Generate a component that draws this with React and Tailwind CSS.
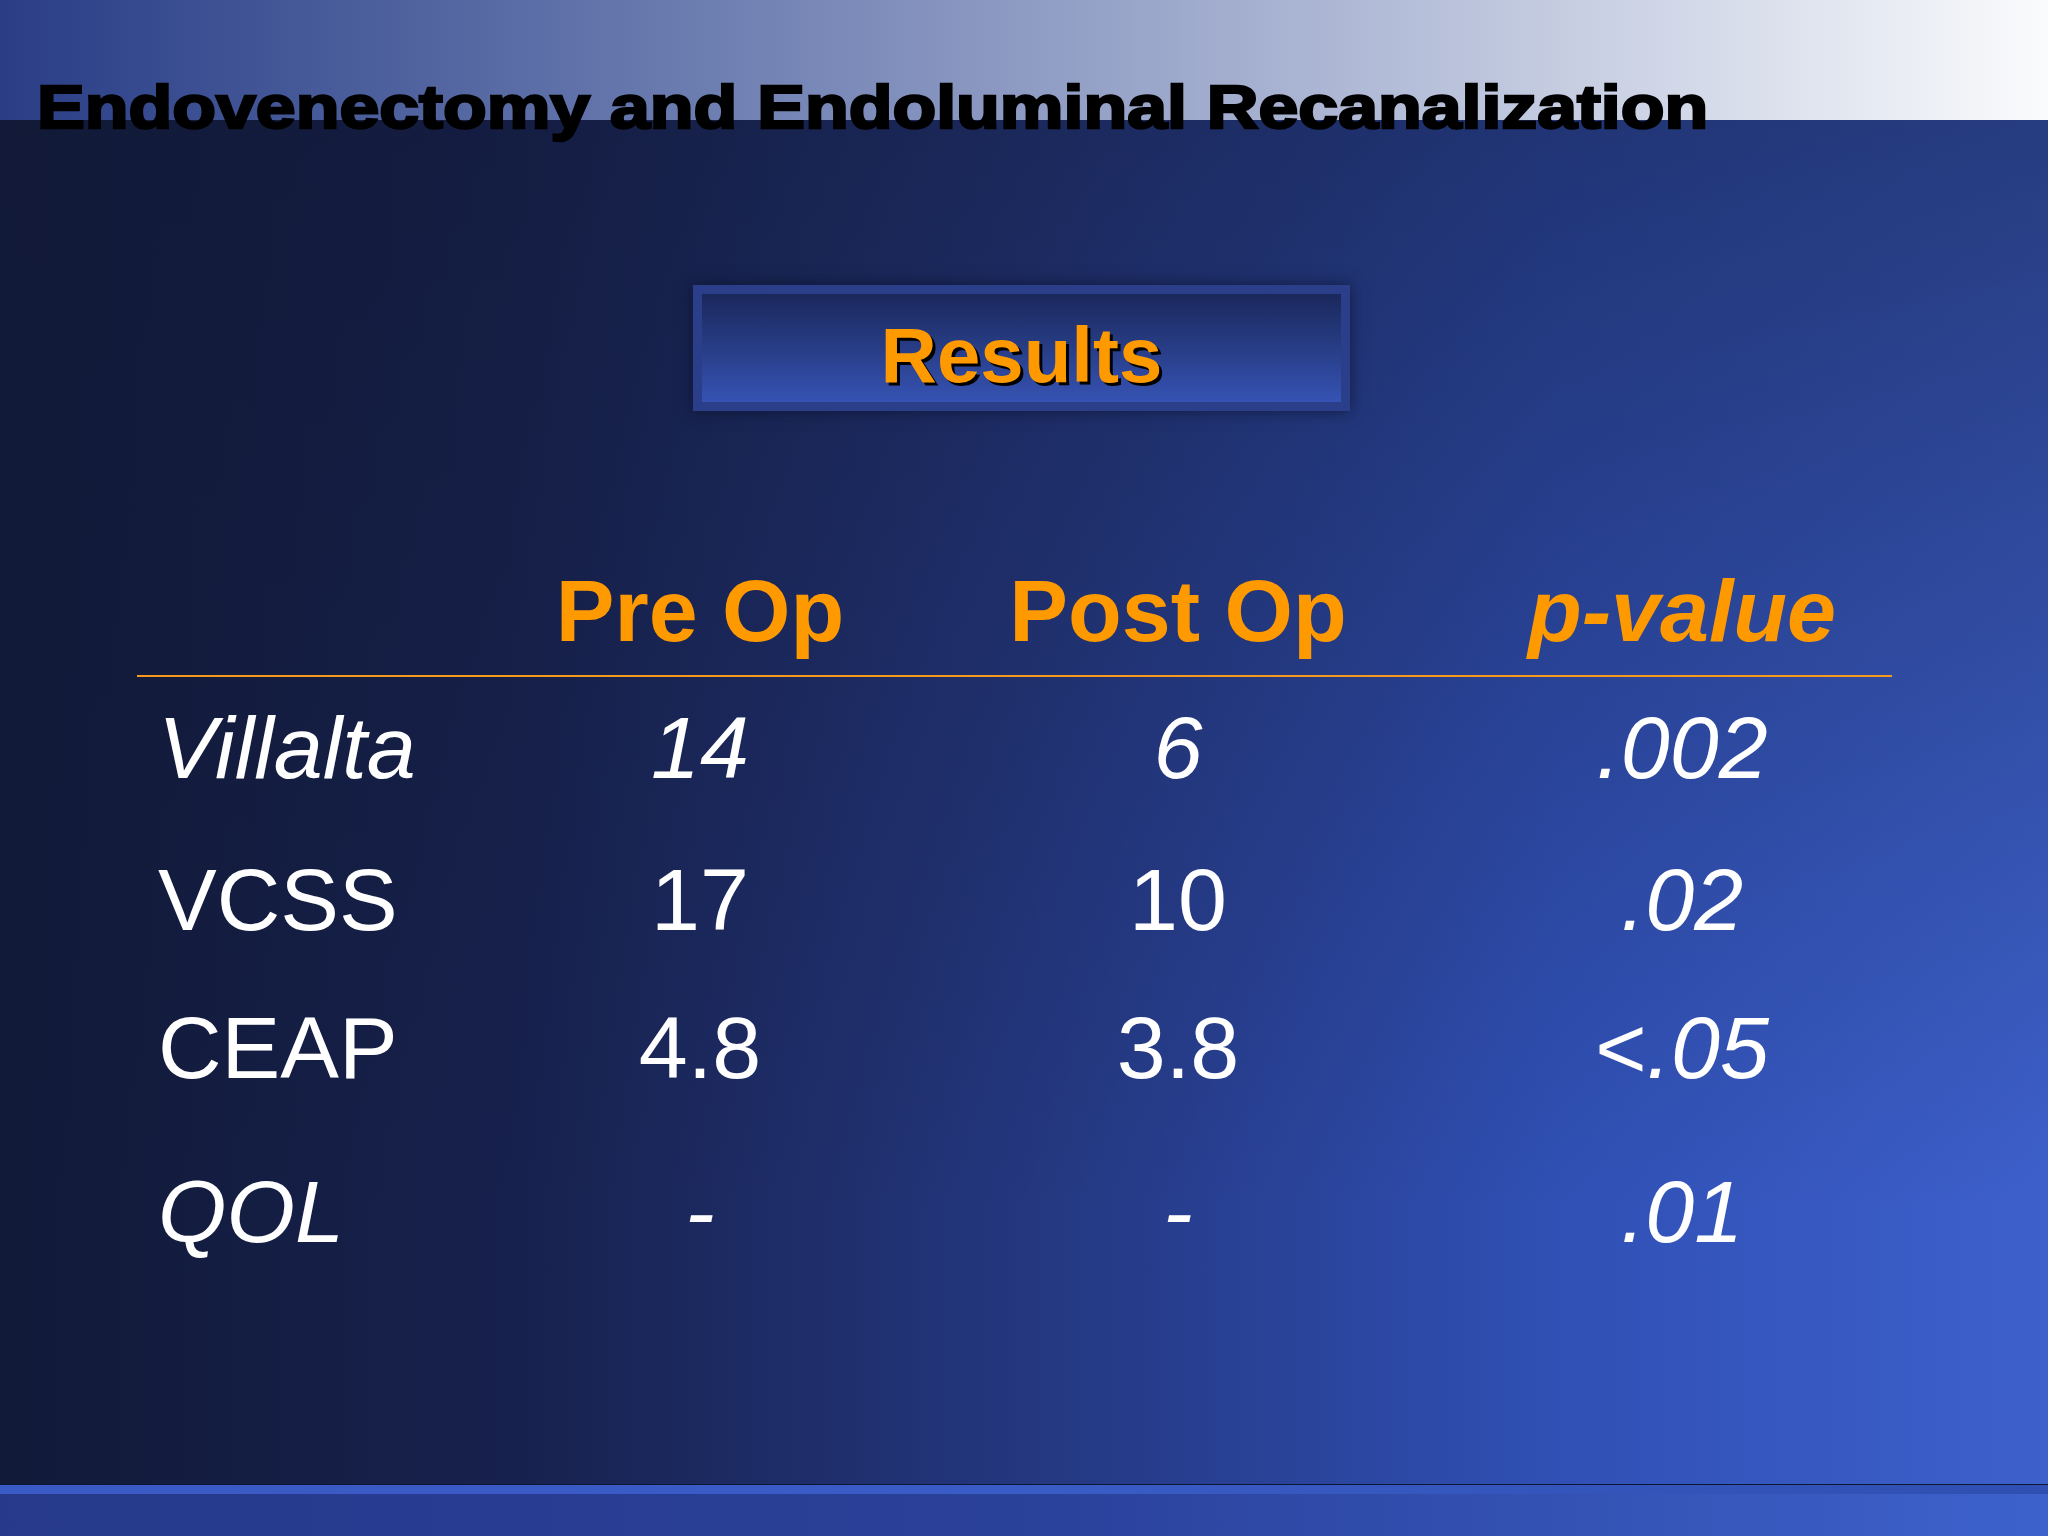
import React from 'react';

const rows = [
  {
    label: 'Villalta',
    labelItalic: true,
    pre: '14',
    post: '6',
    valItalic: true,
    p: <span className="italic">.002</span>,
    height: 'h-[152px]',
  },
  {
    label: 'VCSS',
    labelItalic: false,
    pre: '17',
    post: '10',
    valItalic: false,
    p: <span className="italic">.02</span>,
    height: 'h-[148px]',
  },
  {
    label: 'CEAP',
    labelItalic: false,
    pre: '4.8',
    post: '3.8',
    valItalic: false,
    p: (
      <>
        <span>&lt;</span>
        <span className="italic">.05</span>
      </>
    ),
    height: 'h-[164px]',
  },
  {
    label: 'QOL',
    labelItalic: true,
    pre: '-',
    post: '-',
    valItalic: true,
    p: <span className="italic">.01</span>,
    height: 'h-[100px]',
  },
];

const App = () => {
  return (
    <div className="w-[2048px] h-[1536px] flex flex-col overflow-hidden font-['Liberation_Sans',Arial,sans-serif]">
      {/* Title band */}
      <header className="h-[120px] shrink-0 bg-gradient-to-r from-[#2a3d86] via-[#8e9bc3] to-[#fafbfc] pl-[37px] pt-[76px]">
        <h1 className="origin-left scale-x-[1.155] text-[62px] leading-none font-bold text-black whitespace-nowrap [-webkit-text-stroke:2.5px_#000]">
          Endovenectomy and Endoluminal Recanalization
        </h1>
      </header>

      {/* Slide body */}
      <main className="flex-1 flex flex-col bg-[linear-gradient(to_bottom,rgba(17,25,54,0.5)_0%,rgba(17,25,54,0)_80%),linear-gradient(to_right,#111a38_0%,#17214d_25%,#24377f_50%,#3050b5_76%,#3d60cb_100%)]">
        {/* Results box */}
        <div className="mt-[165px] ml-[693px] w-[657px] h-[126px] border-[9px] border-[#2b3e8a] shadow-[0_0_14px_rgba(8,12,35,0.6)] bg-gradient-to-b from-[#1a285b] to-[#3653b4] flex justify-center pt-[22px]">
          <span className="text-[78px] leading-none font-bold text-[#ff9900] [text-shadow:3px_3px_0_#000]">
            Results
          </span>
        </div>

        {/* Table */}
        <div className="ml-[137px] mt-[156px]">
          <div className="grid grid-cols-[313px_500px_456px_552px] text-[88px] leading-none font-bold text-[#ff9900]">
            <div />
            <div className="text-center">Pre Op</div>
            <div className="text-center">Post Op</div>
            <div className="text-center italic">p-value</div>
          </div>

          <div className="mt-[20px] w-[1755px] h-[2px] bg-[#f59a1c]" />

          <div className="mt-[27px]">
            {rows.map((row) => (
              <div
                key={row.label}
                className={`grid grid-cols-[313px_500px_456px_552px] text-[88px] leading-none text-white ${row.height}`}
              >
                <div className={`pl-[21px] ${row.labelItalic ? 'italic' : ''}`}>{row.label}</div>
                <div className={`text-center ${row.valItalic ? 'italic' : ''}`}>{row.pre}</div>
                <div className={`text-center ${row.valItalic ? 'italic' : ''}`}>{row.post}</div>
                <div className="text-center">{row.p}</div>
              </div>
            ))}
          </div>
        </div>
      </main>

      {/* Bottom rule */}
      <footer className="shrink-0">
        <div className="h-[1px] bg-[#0e1634]" />
        <div className="h-[9px] bg-gradient-to-r from-[#3a5ac6] via-[#3a5cc6] to-[#2f4fb2]" />
        <div className="h-[42px] bg-gradient-to-r from-[#26398a] via-[#2a419a] to-[#3d62cc]" />
      </footer>
    </div>
  );
};

export default App;
